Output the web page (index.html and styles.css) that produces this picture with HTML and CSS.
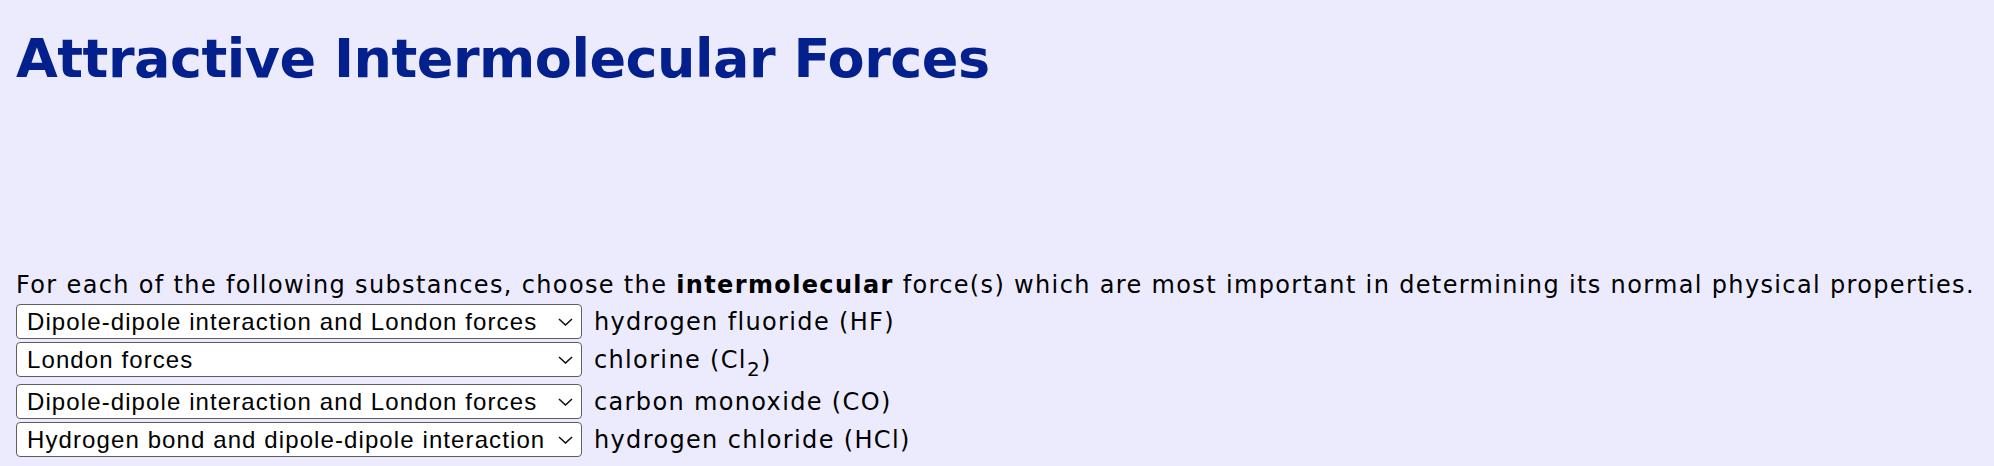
FILE: index.html
```html
<!DOCTYPE html>
<html lang="en">
<head>
<meta charset="utf-8">
<title>Attractive Intermolecular Forces</title>
<link rel="stylesheet" href="styles.css">
</head>
<body>
<div class="page">
  <h1 class="title">Attractive Intermolecular Forces</h1>
  <p class="intro">For each of the following substances, choose the <b>intermolecular</b> force(s) which are most important in determining its normal physical properties.</p>
  <div class="rows">
    <div class="row">
      <span class="pick">
        <select class="dd">
          <option>Dipole-dipole interaction and London forces</option>
          <option>London forces</option>
          <option>Hydrogen bond and dipole-dipole interaction</option>
        </select>
        <svg class="chev" width="15" height="8" viewBox="0 0 15 8"><path d="M1 1 L7.5 7 L14 1" fill="none" stroke="#111" stroke-width="1.6"/></svg>
      </span>
      <span class="label">hydrogen fluoride (HF)</span>
    </div>
    <div class="row row-sub">
      <span class="pick">
        <select class="dd">
          <option>London forces</option>
          <option>Dipole-dipole interaction and London forces</option>
          <option>Hydrogen bond and dipole-dipole interaction</option>
        </select>
        <svg class="chev" width="15" height="8" viewBox="0 0 15 8"><path d="M1 1 L7.5 7 L14 1" fill="none" stroke="#111" stroke-width="1.6"/></svg>
      </span>
      <span class="label">chlorine (Cl<sub>2</sub>)</span>
    </div>
    <div class="row">
      <span class="pick">
        <select class="dd">
          <option>Dipole-dipole interaction and London forces</option>
          <option>London forces</option>
          <option>Hydrogen bond and dipole-dipole interaction</option>
        </select>
        <svg class="chev" width="15" height="8" viewBox="0 0 15 8"><path d="M1 1 L7.5 7 L14 1" fill="none" stroke="#111" stroke-width="1.6"/></svg>
      </span>
      <span class="label">carbon monoxide (CO)</span>
    </div>
    <div class="row">
      <span class="pick">
        <select class="dd">
          <option>Hydrogen bond and dipole-dipole interaction</option>
          <option>Dipole-dipole interaction and London forces</option>
          <option>London forces</option>
        </select>
        <svg class="chev" width="15" height="8" viewBox="0 0 15 8"><path d="M1 1 L7.5 7 L14 1" fill="none" stroke="#111" stroke-width="1.6"/></svg>
      </span>
      <span class="label">hydrogen chloride (HCl)</span>
    </div>
  </div>
</div>
</body>
</html>
```

FILE: styles.css
```css
html, body {
  margin: 0;
  padding: 0;
  background: #ebebfd;
}

.page {
  padding: 27px 16px 0 16px;
  font-family: "DejaVu Sans", Verdana, sans-serif;
  color: #000;
}

.title {
  margin: 0;
  font-family: "DejaVu Sans", Verdana, sans-serif;
  font-weight: bold;
  font-size: 54px;
  line-height: 63px;
  letter-spacing: -0.5px;
  color: #03208c;
}

.intro {
  margin: 181px 0 0 0;
  font-size: 24px;
  line-height: 28px;
  letter-spacing: 1.35px;
  white-space: nowrap;
}

.rows {
  display: flex;
  flex-direction: column;
  gap: 3px;
  margin-top: 5px;
}

.row {
  display: flex;
  align-items: center;
  gap: 12px;
  height: 35px;
}

.row-sub {
  margin-bottom: 4px;
}

.pick {
  position: relative;
  display: block;
  width: 566px;
  height: 35px;
}

.dd {
  -webkit-appearance: none;
  appearance: none;
  box-sizing: border-box;
  width: 100%;
  height: 100%;
  margin: 0;
  padding: 0 30px 0 10px;
  border: 1.5px solid #5f5f5f;
  border-radius: 4px;
  background: #fff;
  color: #000;
  font-family: "Liberation Sans", Arial, sans-serif;
  font-size: 24px;
  letter-spacing: 1.1px;
}

.chev {
  position: absolute;
  right: 9px;
  top: 14px;
  pointer-events: none;
}

.label {
  font-size: 24px;
  line-height: 28px;
  letter-spacing: 1.35px;
  white-space: nowrap;
}

.label sub {
  font-size: 20px;
  line-height: 0;
  vertical-align: -8px;
}
```
